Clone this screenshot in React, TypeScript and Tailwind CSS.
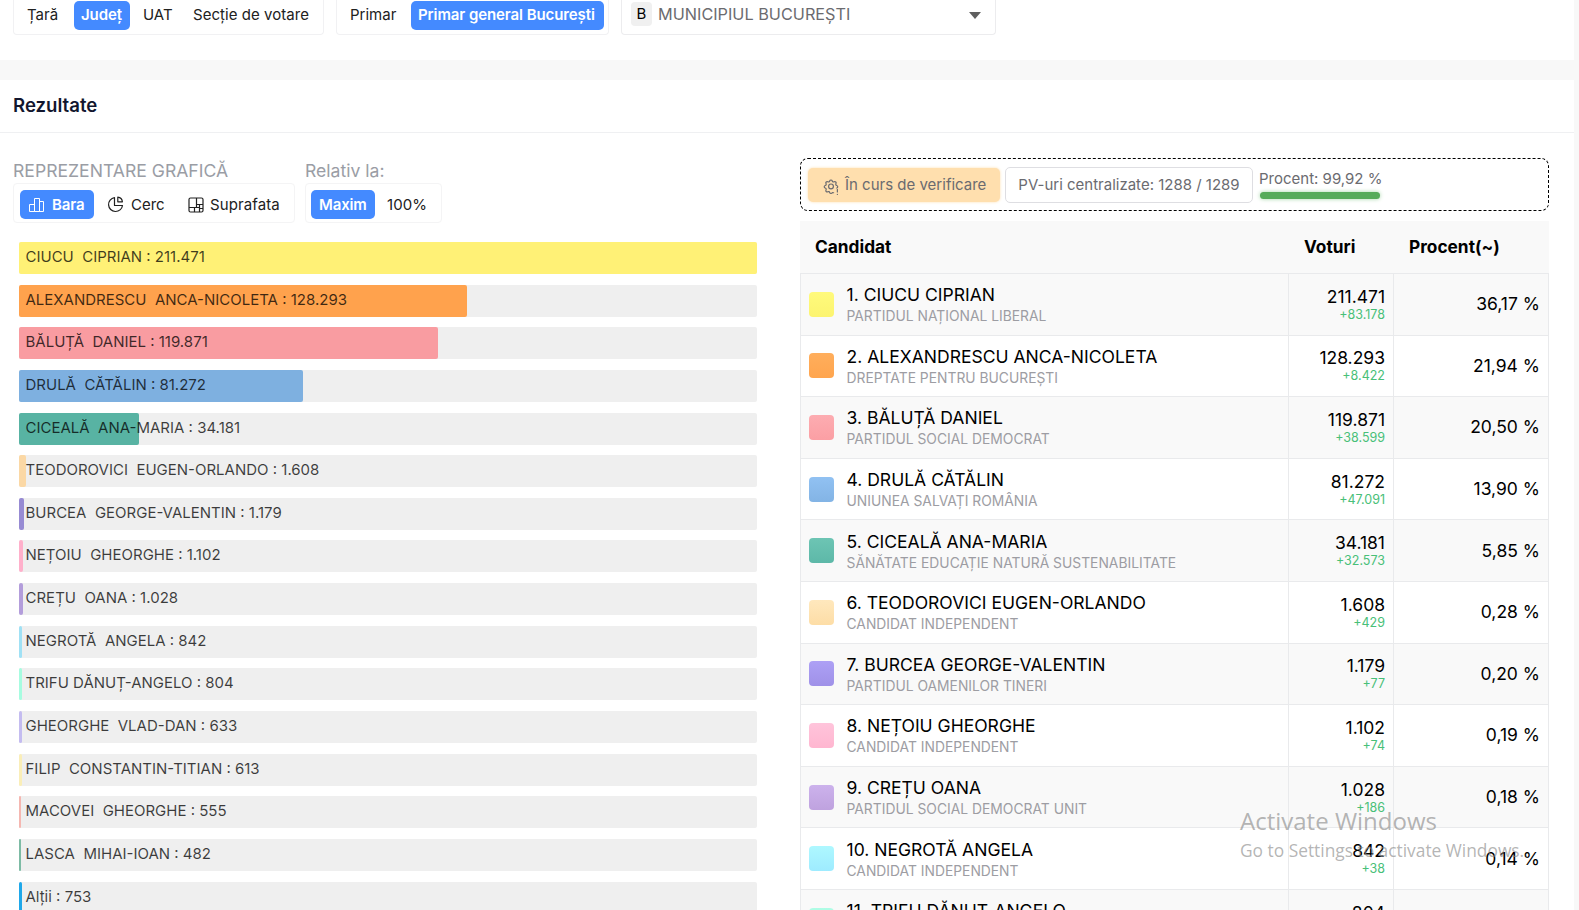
var bars = [
  { label: 'CIUCU  CIPRIAN : 211.471', width: 738, color: '#fff176' },
  { label: 'ALEXANDRESCU  ANCA-NICOLETA : 128.293', width: 448, color: '#ffa24d' },
  { label: 'BĂLUȚĂ  DANIEL : 119.871', width: 418.5, color: '#f99ca1' },
  { label: 'DRULĂ  CĂTĂLIN : 81.272', width: 284, color: '#7eb0e0' },
  { label: 'CICEALĂ  ANA-MARIA : 34.181', width: 119.5, color: '#58b3a3' },
  { label: 'TEODOROVICI  EUGEN-ORLANDO : 1.608', width: 7, color: '#fbd8a5' },
  { label: 'BURCEA  GEORGE-VALENTIN : 1.179', width: 4.5, color: '#978bd3' },
  { label: 'NEȚOIU  GHEORGHE : 1.102', width: 4, color: '#ffb0cb' },
  { label: 'CREȚU  OANA : 1.028', width: 4, color: '#b39ddb' },
  { label: 'NEGROTĂ  ANGELA : 842', width: 3, color: '#a0e1f5' },
  { label: 'TRIFU DĂNUȚ-ANGELO : 804', width: 3, color: '#a7fce0' },
  { label: 'GHEORGHE  VLAD-DAN : 633', width: 2.5, color: '#c4bcf0' },
  { label: 'FILIP  CONSTANTIN-TITIAN : 613', width: 2.5, color: '#faeeb8' },
  { label: 'MACOVEI  GHEORGHE : 555', width: 2, color: '#f5b7b1' },
  { label: 'LASCA  MIHAI-IOAN : 482', width: 2, color: '#7dbba5' },
  { label: 'Alții : 753', width: 3, color: '#1fa8ea' },
]

var rows = [
  { name: 'CIUCU CIPRIAN', party: 'PARTIDUL NAȚIONAL LIBERAL', votes: '211.471', diff: '+83.178', pct: '36,17 %', color: 'from-[#fffa7c] to-[#fcf470]' },
  { name: 'ALEXANDRESCU ANCA-NICOLETA', party: 'DREPTATE PENTRU BUCUREȘTI', votes: '128.293', diff: '+8.422', pct: '21,94 %', color: 'from-[#ffae5c] to-[#ffa54e]' },
  { name: 'BĂLUȚĂ DANIEL', party: 'PARTIDUL SOCIAL DEMOCRAT', votes: '119.871', diff: '+38.599', pct: '20,50 %', color: 'from-[#fdacb1] to-[#fb9fa4]' },
  { name: 'DRULĂ CĂTĂLIN', party: 'UNIUNEA SALVAȚI ROMÂNIA', votes: '81.272', diff: '+47.091', pct: '13,90 %', color: 'from-[#91c1f2] to-[#83b4e5]' },
  { name: 'CICEALĂ ANA-MARIA', party: 'SĂNĂTATE EDUCAȚIE NATURĂ SUSTENABILITATE', votes: '34.181', diff: '+32.573', pct: '5,85 %', color: 'from-[#6dc5b4] to-[#5db8a8]' },
  { name: 'TEODOROVICI EUGEN-ORLANDO', party: 'CANDIDAT INDEPENDENT', votes: '1.608', diff: '+429', pct: '0,28 %', color: 'from-[#ffe8bd] to-[#fddda6]' },
  { name: 'BURCEA GEORGE-VALENTIN', party: 'PARTIDUL OAMENILOR TINERI', votes: '1.179', diff: '+77', pct: '0,20 %', color: 'from-[#ada0f5] to-[#9f91e8]' },
  { name: 'NEȚOIU GHEORGHE', party: 'CANDIDAT INDEPENDENT', votes: '1.102', diff: '+74', pct: '0,19 %', color: 'from-[#ffc4db] to-[#ffb6d0]' },
  { name: 'CREȚU OANA', party: 'PARTIDUL SOCIAL DEMOCRAT UNIT', votes: '1.028', diff: '+186', pct: '0,18 %', color: 'from-[#ccb2ec] to-[#bfa2df]' },
  { name: 'NEGROTĂ ANGELA', party: 'CANDIDAT INDEPENDENT', votes: '842', diff: '+38', pct: '0,14 %', color: 'from-[#aef8ff] to-[#9eebff]' },
  { name: 'TRIFU DĂNUȚ-ANGELO', party: 'CANDIDAT INDEPENDENT', votes: '804', diff: '+171', pct: '0,14 %', color: 'from-[#affde6] to-[#a0f5d8]' },
]

function BarIcon() {
  return (
    <svg width="18" height="18" viewBox="0 0 18 18" fill="none" stroke="currentColor" strokeWidth="1" className="shrink-0">
      <path d="M1.5 8.5h5v7h-5zM6.5 2.5h5v13h-5zM11.5 5.5h4v10h-4z" />
    </svg>
  )
}

function PieIcon() {
  return (
    <svg width="17" height="17" viewBox="0 0 17 17" fill="none" stroke="currentColor" strokeWidth="1.2" strokeLinejoin="round" className="shrink-0">
      <path d="M7.5 1.6a7 7 0 1 0 8 7.9h-8z" />
      <path d="M10.8 1.2v4.6h4.6a5.2 5.2 0 0 0-4.6-4.6z" />
    </svg>
  )
}

function AreaIcon() {
  return (
    <svg width="16" height="16" viewBox="0 0 16 16" fill="none" stroke="currentColor" strokeWidth="1.2" className="shrink-0">
      <rect x="1" y="1" width="14" height="14" rx="1.5" />
      <path d="M8.5 1v9.5M1 10.5h10.5M6.5 10.5V15M8.5 7.5H15M11.5 7.5V15M11.5 11.5H15" />
    </svg>
  )
}

function GearIcon() {
  return (
    <svg width="18" height="18" viewBox="0 0 24 24" fill="none" stroke="currentColor" strokeWidth="1.6" strokeLinecap="round" strokeLinejoin="round" className="shrink-0">
      <path d="M15.5 21l-1.8-.3c-.4 1.7-3 1.700-3.400 0a1.724 1.724 0 0 0-2.573-1.066c-1.543.94-3.310-.826-2.370-2.370a1.724 1.724 0 0 0-1.065-2.572c-1.756-.426-1.756-2.924 0-3.350a1.724 1.724 0 0 0 1.066-2.573c-.94-1.543.826-3.310 2.370-2.370 1 .608 2.296.070 2.572-1.065.426-1.756 2.924-1.756 3.350 0a1.724 1.724 0 0 0 2.573 1.066c1.543-.94 3.310.826 2.370 2.370a1.724 1.724 0 0 0 1.065 2.572c1.756.426 1.756 2.924 0 3.350" />
      <circle cx="12" cy="12.500" r="3.200" />
      <path d="M20.500 16.500v3.500M20.500 23v.2" />
    </svg>
  )
}

function Tab(props: any) {
  return (
    <button className={'flex items-center h-[29px] rounded-[5px] whitespace-nowrap text-[15px] ' + (props.active ? 'bg-[#448aff] text-white font-semibold ' : 'text-[#212121] ') + props.className}>
      {props.children}
    </button>
  )
}

export default function App() {
  return (
    <div className="relative w-[1579px] h-[910px] overflow-hidden bg-[#f8f8f8] font-['Inter',sans-serif] text-black">
      <section className="w-[1574px] h-[60px] bg-white flex gap-3 pl-[13px]">
        <div className="flex w-[311px] h-[35px] pt-[1px] pl-[6px] border border-t-0 border-[#f1f1f3] rounded-b">
          <Tab className="pl-[7px] w-[54px]">Țară</Tab>
          <Tab active className="pl-[7px] w-[56px] tracking-[-0.1px]">Județ</Tab>
          <Tab className="pl-[13px] w-[57px]">UAT</Tab>
          <Tab className="pl-[6px] tracking-[0.05px]">Secție de votare</Tab>
        </div>
        <div className="flex w-[273px] h-[35px] pt-[1px] pl-[6px] border border-t-0 border-[#f1f1f3] rounded-b">
          <Tab className="pl-[7px] w-[68px]">Primar</Tab>
          <Tab active className="pl-[7px] w-[193px] tracking-[-0.09px]">Primar general București</Tab>
        </div>
        <div className="flex items-center w-[375px] h-[35px] pl-[9px] pr-[14px] pb-[6px] border border-t-0 border-[#ececee] rounded-b text-[16.25px] text-[#6b6b6f]">
          <span className="w-[21px] h-[24px] flex items-center justify-center bg-[#f0f0f0] rounded-sm text-[15px] text-black mr-[6px]">B</span>
          MUNICIPIUL BUCUREȘTI
          <svg width="12" height="7" viewBox="0 0 12 7" className="ml-auto mt-[3px]"><path d="M0 0h12L6 7z" fill="#5f5f5f" /></svg>
        </div>
      </section>

      <section className="w-[1574px] h-[830px] mt-5 bg-white">
        <h2 className="h-[53px] pl-[13px] pt-[12px] border-b border-[#eff0f2] text-[18.6px] leading-[27px] font-semibold text-[#12162e]">Rezultate</h2>
        <div className="flex">
          <div className="w-[800px] pt-[25px]">
            <div className="flex gap-[10px] pl-[13px] text-[#9a9da5] text-[17.6px] leading-[26px]">
              <div>
                <p>REPREZENTARE GRAFICĂ</p>
                <div className="flex w-[282px] h-[40px] mt-[-1px] pt-[6px] pl-[6px] border border-[#f4f4f5] rounded">
                  <Tab active className="pl-[8px] w-[74px] gap-[6px] tracking-[-0.1px]"><BarIcon />Bara</Tab>
                  <Tab className="pl-[13px] w-[85px] gap-[7px]"><PieIcon />Cerc</Tab>
                  <Tab className="pl-[9px] gap-[6px] tracking-[0.1px]"><AreaIcon />Suprafata</Tab>
                </div>
              </div>
              <div>
                <p>Relativ la:</p>
                <div className="flex w-[137px] h-[40px] mt-[-1px] pt-[6px] pl-[5px] border border-[#f4f4f5] rounded">
                  <Tab active className="pl-[8px] w-[64px] tracking-[-0.15px]">Maxim</Tab>
                  <Tab className="pl-[12px] tracking-[0.1px]">100%</Tab>
                </div>
              </div>
            </div>
            <div className="pt-[19px] pl-[19px] flex flex-col gap-[10.65px]">
              {bars.map(function(bar) {
                return (
                  <div key={bar.label} className="relative shrink-0 w-[737.5px] h-8 bg-[#efefef] rounded-xs">
                    <div className="h-8 rounded-xs" style={{ width: bar.width, backgroundColor: bar.color }} />
                    <span className="absolute left-[6.5px] top-[3px] leading-[23px] text-[15px] whitespace-pre text-black/75">{bar.label}</span>
                  </div>
                )
              })}
            </div>
          </div>

          <div className="w-[749px] pt-[25px]">
            <div className="flex items-center h-[53px] pl-[7px] border border-dashed border-black rounded-lg text-[15px] text-[#6b6b70]">
              <div className="flex items-center gap-[5px] w-[192px] h-[34px] pl-[14px] pt-[2px] rounded-[5px] bg-[#ffdfae] shadow-[0_0_3px_#ffdfae]">
                <GearIcon />
                În curs de verificare
              </div>
              <div className="flex items-center justify-center w-[248px] h-[36px] ml-[5px] pt-[1px] border border-[#dedee2] rounded-[5px]">PV-uri centralizate: 1288 / 1289</div>
              <div className="ml-[6px] mt-[-3px]">
                <p className="leading-[22px]">Procent: 99,92 %</p>
                <div className="w-[120px] h-[7px] mt-[2px] ml-[1px] rounded bg-[#56ab5a] shadow-[0_0_4px_#a5d6a7]" />
              </div>
            </div>
            <table className="w-[749px] mt-[10px] table-fixed border-separate border-spacing-0">
              <colgroup>
                <col className="w-[489px]" />
                <col className="w-[105px]" />
                <col className="w-[155px]" />
              </colgroup>
              <thead>
                <tr className="h-[53px] bg-[#f9f9f9] text-[17.3px] text-left">
                  <th className="pl-[15px] font-bold border-b border-[#e9eaec]">Candidat</th>
                  <th className="pl-[15px] font-bold border-b border-[#e9eaec]">Voturi</th>
                  <th className="pl-[15px] font-bold border-b border-[#e9eaec]">Procent(~)</th>
                </tr>
              </thead>
              <tbody>
                {rows.map(function(row, i) {
                  return (
                    <tr key={row.name} className={'h-[61.6px] ' + (i % 2 === 0 ? 'bg-[#f9f9f9]' : 'bg-white')}>
                      <td className="p-0 border-b border-x border-[#e9eaec]">
                        <div className="flex items-center pl-2 gap-[12.5px]">
                          <div className={'w-[25px] h-[25px] rounded-[4px] bg-linear-to-b ' + row.color} />
                          <div>
                            <p className="text-[17.55px] leading-[24px]">{i + 1}. {row.name}</p>
                            <p className="text-[13.85px] leading-[18px] text-[#9d9da3]">{row.party}</p>
                          </div>
                        </div>
                      </td>
                      <td className="p-0 pr-2 text-right border-b border-r border-[#e9eaec]">
                        <p className="text-[17.5px] leading-[20px]">{row.votes}</p>
                        <p className="text-[12.5px] leading-[15px] text-[#48c078]">{row.diff}</p>
                      </td>
                      <td className="p-0 pr-[8px] text-right text-[17.5px] border-b border-r border-[#e9eaec]">{row.pct}</td>
                    </tr>
                  )
                })}
              </tbody>
            </table>
          </div>
        </div>
      </section>

      <div className="absolute left-[1240px] top-[805px] font-['Open_Sans','Noto_Sans',sans-serif] text-[#8b8b8b]/65 whitespace-nowrap">
        <p className="text-[24px] leading-[32px]">Activate Windows</p>
        <p className="text-[17.35px] leading-[27px]">Go to Settings to activate Windows.</p>
      </div>
    </div>
  )
}
